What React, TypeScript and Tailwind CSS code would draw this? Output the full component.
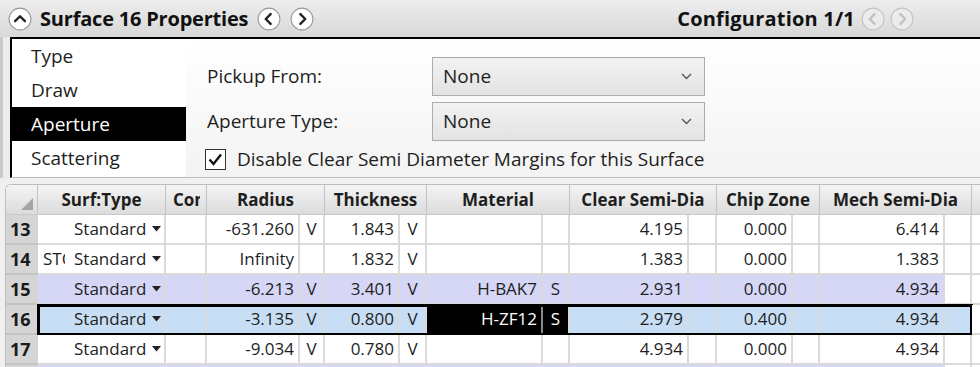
import React from 'react';

const FONT = '"Open Sans", "Noto Sans", sans-serif';

type Dir = 'up' | 'left' | 'right';

// round nav button in the title bar
function CircleBtn({ dir, disabled }: { dir: Dir; disabled?: boolean }) {
  const paths: Record<Dir, string> = {
    up: 'M6.5 13 L11 8.5 L15.5 13',
    left: 'M12.5 6.5 L8 11 L12.5 15.5',
    right: 'M9.5 6.5 L14 11 L9.5 15.5',
  };
  return (
    <svg width="24" height="24" viewBox="0 0 22 22" className="shrink-0">
      <circle
        cx="11"
        cy="11"
        r="10"
        fill={disabled ? '#ececec' : '#ffffff'}
        stroke={disabled ? '#c4c4c4' : '#9a9a9a'}
        strokeWidth="1"
      />
      <path
        d={paths[dir]}
        fill="none"
        stroke={disabled ? '#c2c2c2' : '#222'}
        strokeWidth="2.2"
        strokeLinecap="round"
        strokeLinejoin="round"
      />
    </svg>
  );
}

function Dropdown() {
  return (
    <div className="w-[273px] h-[39px] border border-[#acacac] bg-gradient-to-b from-[#f2f2f2] to-[#e3e3e3] flex items-center justify-between pl-[10px] pr-[12px] text-[19px] text-[#1e1e1e]">
      <span>None</span>
      <svg width="11" height="7" viewBox="0 0 11 7">
        <path d="M1 1 L5.5 5.5 L10 1" fill="none" stroke="#555" strokeWidth="1.4" />
      </svg>
    </div>
  );
}

const SIDE_ITEMS = ['Type', 'Draw', 'Aperture', 'Scattering'];

type Row = {
  n: number;
  sto?: string;
  rad: string;
  radF: string;
  thk: string;
  thkF: string;
  mat: string;
  matF: string;
  clr: string;
  chip: string;
  mech: string;
  bg: string;
  selected?: boolean;
};

const PURPLE = 'bg-[#d6d6f7]';

const ROWS: Row[] = [
  { n: 13, rad: '-631.260', radF: 'V', thk: '1.843', thkF: 'V', mat: '', matF: '', clr: '4.195', chip: '0.000', mech: '6.414', bg: 'bg-white' },
  { n: 14, sto: 'STO', rad: 'Infinity', radF: '', thk: '1.832', thkF: 'V', mat: '', matF: '', clr: '1.383', chip: '0.000', mech: '1.383', bg: 'bg-white' },
  { n: 15, rad: '-6.213', radF: 'V', thk: '3.401', thkF: 'V', mat: 'H-BAK7', matF: 'S', clr: '2.931', chip: '0.000', mech: '4.934', bg: PURPLE },
  { n: 16, rad: '-3.135', radF: 'V', thk: '0.800', thkF: 'V', mat: 'H-ZF12', matF: 'S', clr: '2.979', chip: '0.400', mech: '4.934', bg: 'bg-[#c8def5]', selected: true },
  { n: 17, rad: '-9.034', radF: 'V', thk: '0.780', thkF: 'V', mat: '', matF: '', clr: '4.934', chip: '0.000', mech: '4.934', bg: 'bg-white' },
  { n: 18, rad: '', radF: '', thk: '', thkF: '', mat: '', matF: '', clr: '', chip: '', mech: '', bg: PURPLE },
];

const cell = 'h-full border-r-2 border-b-2 border-[#dadada] flex items-center shrink-0 overflow-hidden whitespace-nowrap';
const num = 'justify-end pr-[4px]';
const flag = 'justify-center';

function DataRow({ r }: { r: Row }) {
  const dark = r.selected;
  const partial = r.n === 18; // only the top few pixels are on screen
  return (
    <div className="flex h-[30px] shrink-0">
      <div className="w-[32px] h-full shrink-0 bg-[#d5d5d5] border-b-2 border-[#c4c4c4] flex items-center pl-[4px] font-bold text-[18px] text-[#1a1a1a]">
        {partial ? '' : r.n}
      </div>
      <div className={`flex h-full ${r.bg} ${dark ? 'outline-[3px] outline-black -outline-offset-2' : ''}`}>
        <div className={`${cell} w-[128px]`}>
          <span className="w-[27px] pl-[5px] overflow-hidden whitespace-nowrap shrink-0">{r.sto}</span>
          {!partial && (
            <span className="flex items-center gap-[6px] ml-[9px]">
              Standard
              <svg width="9" height="6" viewBox="0 0 9 6">
                <path d="M0 0 H9 L4.5 5.5 Z" fill="#222" />
              </svg>
            </span>
          )}
        </div>
        <div className={`${cell} w-[41px]`} />
        <div className={`${cell} ${num} w-[93px]`}>{r.rad}</div>
        <div className={`${cell} ${flag} w-[25px]`}>{r.radF}</div>
        <div className={`${cell} ${num} w-[75px]`}>{r.thk}</div>
        <div className={`${cell} ${flag} w-[27px]`}>{r.thkF}</div>
        <div className={`${cell} ${num} w-[116px] ${dark ? 'bg-black text-white border-r-[#8a8a8a]' : ''}`}>{r.mat}</div>
        <div className={`${cell} ${flag} w-[27px] ${dark ? 'bg-black text-white' : ''}`}>{r.matF}</div>
        <div className={`${cell} ${num} w-[119px]`}>{r.clr}</div>
        <div className={`${cell} w-[28px]`} />
        <div className={`${cell} ${num} w-[76px]`}>{r.chip}</div>
        <div className={`${cell} w-[27px]`} />
        <div className={`${cell} ${num} w-[125px]`}>{r.mech}</div>
        <div className={`${cell} w-[27px] ${r.bg === PURPLE ? 'bg-white' : ''}`} />
      </div>
      <div className={`${cell} w-[20px] bg-white`} />
    </div>
  );
}

const HEADERS: { label: string; w: number }[] = [
  { label: 'Surf:Type', w: 128 },
  { label: 'Comment', w: 41 },
  { label: 'Radius', w: 118 },
  { label: 'Thickness', w: 102 },
  { label: 'Material', w: 143 },
  { label: 'Clear Semi-Dia', w: 147 },
  { label: 'Chip Zone', w: 103 },
  { label: 'Mech Semi-Dia', w: 152 },
];

export default function App() {
  return (
    <div
      className="w-[980px] h-[367px] overflow-hidden bg-[#ececec] text-[#1e1e1e] flex flex-col"
      style={{ fontFamily: FONT }}
    >
      {/* title bar */}
      <div className="h-[37px] shrink-0 flex items-center bg-gradient-to-b from-[#ededed] to-[#d8d8d8] pl-[8px] pr-[66px]">
        <CircleBtn dir="up" />
        <span className="ml-[8px] font-bold text-[20px] tracking-[-0.2px] text-[#111]">Surface 16 Properties</span>
        <div className="ml-[9px] flex gap-[9px]">
          <CircleBtn dir="left" />
          <CircleBtn dir="right" />
        </div>
        <span className="ml-auto font-bold text-[20px] tracking-[0.2px] text-[#111]">Configuration 1/1</span>
        <div className="ml-[6px] flex gap-[5px]">
          <CircleBtn dir="left" disabled />
          <CircleBtn dir="right" disabled />
        </div>
      </div>

      {/* properties panel */}
      <div className="h-[141px] shrink-0 flex border-l-[3px] border-[#c9c9c9] pl-[7px]">
        <div className="flex-1 flex border-l-2 border-t-2 border-black border-b border-b-[#bdbdbd]">
          <div className="w-[174px] bg-white flex flex-col text-[19px]">
            {SIDE_ITEMS.map((it) => (
              <div
                key={it}
                className={`h-[34px] flex items-center pl-[19px] ${it === 'Aperture' ? 'bg-black text-white' : ''}`}
              >
                {it}
              </div>
            ))}
          </div>
          <div className="flex-1 bg-gradient-to-b from-white to-[#f3f3f3] pl-[21px] pt-[18px] text-[19px]">
            <div className="flex items-center h-[39px]">
              <span className="w-[225px]">Pickup From:</span>
              <Dropdown />
            </div>
            <div className="flex items-center h-[39px] mt-[6px]">
              <span className="w-[225px]">Aperture Type:</span>
              <Dropdown />
            </div>
            <div className="flex items-center mt-[4px] -ml-[2px]">
              <svg width="21" height="21" viewBox="0 0 21 21">
                <rect x="0.5" y="0.5" width="20" height="20" fill="#fff" stroke="#333" />
                <path d="M4.5 10.5 L8.5 15 L16 5.5" fill="none" stroke="#111" strokeWidth="2.4" />
              </svg>
              <span className="ml-[11px]">Disable Clear Semi Diameter Margins for this Surface</span>
            </div>
          </div>
        </div>
      </div>

      {/* lens data table */}
      <div className="flex-1 pt-[6px] pl-[5px] bg-[#f0f0f0]">
        <div className="h-full rounded-tl-[6px] overflow-hidden border-l border-t border-[#bdbdbd] bg-white text-[17px]">
          <div className="flex h-[30px] bg-gradient-to-b from-[#f4f4f4] to-[#dcdcdc] border-b border-[#c8c8c8] font-bold">
            <div className="w-[32px] h-full shrink-0 border-r border-[#c4c4c4] relative">
              <svg width="12" height="12" viewBox="0 0 12 12" className="absolute right-[4px] bottom-[4px]">
                <path d="M12 0 V12 H0 Z" fill="#a5a5a5" />
              </svg>
            </div>
            {HEADERS.map((h) => (
              <div
                key={h.label}
                style={{ width: h.w }}
                className={`h-full shrink-0 border-r border-[#c4c4c4] flex items-center overflow-hidden whitespace-nowrap ${
                  h.label === 'Comment' ? 'pl-[7px]' : 'justify-center'
                }`}
              >
                {h.label === 'Comment' ? (
                  <span className="block w-[27px] overflow-hidden">{h.label}</span>
                ) : (
                  h.label
                )}
              </div>
            ))}
            <div className="w-[20px] h-full shrink-0" />
          </div>
          {ROWS.map((r) => (
            <DataRow key={r.n} r={r} />
          ))}
        </div>
      </div>
    </div>
  );
}
